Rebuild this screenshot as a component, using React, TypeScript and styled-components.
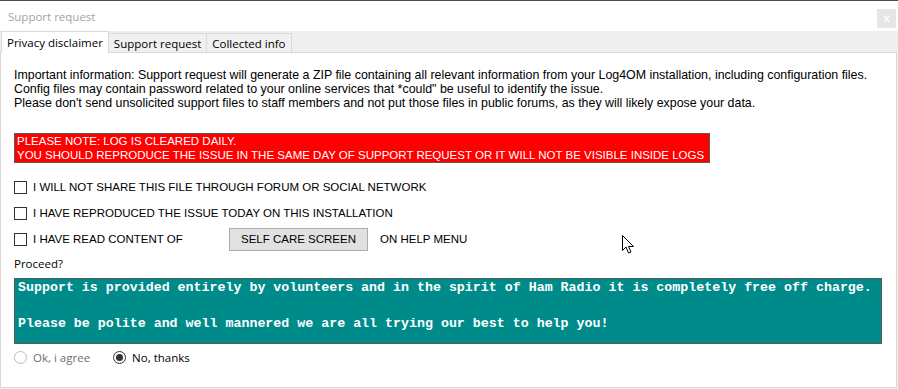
import React, { ReactElement } from "react";
import styled, { createGlobalStyle } from "styled-components";

const GlobalStyle = createGlobalStyle`
  html, body {
    margin: 0;
    padding: 0;
    background: #efefef;
  }
`;

const Window = styled.div`
  position: relative;
  width: 898px;
  height: 389px;
  display: flex;
  flex-direction: column;
  background: #efefef;
  overflow: hidden;
  font-family: "Liberation Sans", Arial, sans-serif;
`;

const TopStrip = styled.div`
  height: 1px;
  background: #4a4a4a;
`;

const TitleBar = styled.div`
  height: 30px;
  background: #fff;
  display: flex;
  align-items: center;
  justify-content: space-between;
  padding: 0 2px 0 8px;
`;

const Title = styled.span`
  font-family: "Open Sans", "Noto Sans", sans-serif;
  font-size: 11.5px;
  color: #a3a3a3;
`;

const CloseButton = styled.div`
  width: 19px;
  height: 19px;
  background: #e6e6e6;
  color: #fff;
  font-family: "Liberation Sans", sans-serif;
  font-size: 11px;
  font-weight: bold;
  display: flex;
  align-items: center;
  justify-content: center;
  margin-top: 4px;
`;

const TabArea = styled.div`
  flex: 1;
  display: flex;
  flex-direction: column;
  padding: 0 1px 1px 0;
`;

const TabStrip = styled.div`
  height: 21px;
  display: flex;
  align-items: flex-end;
  padding-left: 1px;
`;

const Tab = styled.div<{ $active?: boolean }>`
  height: ${(p) => (p.$active ? 21 : 18)}px;
  padding: 0 5px;
  display: flex;
  align-items: center;
  font-family: "Open Sans", "Noto Sans", sans-serif;
  font-size: 11.5px;
  color: #000;
  background: ${(p) => (p.$active ? "#fff" : "#f0f0f0")};
  border: 1px solid #d9d9d9;
  border-bottom: none;
  margin-bottom: ${(p) => (p.$active ? -1 : 0)}px;
  position: relative;
  z-index: ${(p) => (p.$active ? 1 : 0)};
  & + & {
    border-left: none;
  }
`;

const Panel = styled.div`
  flex: 1;
  background: #fff;
  border: 1px solid #d9d9d9;
  padding: 15px 13px 0 13px;
  display: flex;
  flex-direction: column;
`;

const Info = styled.p`
  margin: 0;
  font-size: 12.4px;
  line-height: 14px;
  color: #000;
  white-space: nowrap;
`;

const Notice = styled.div`
  margin-top: 23px;
  width: 696px;
  height: 30px;
  background: #ff0000;
  border: 1px solid #5a5a5a;
  color: #fff;
  font-size: 11.5px;
  line-height: 14px;
  padding-left: 2px;
  box-sizing: border-box;
  white-space: nowrap;
  overflow: hidden;
`;

const Checks = styled.div`
  margin-top: 11px;
  display: flex;
  flex-direction: column;
`;

const Row = styled.div`
  height: 26px;
  display: flex;
  align-items: center;
`;

const Box = styled.span`
  width: 13px;
  height: 13px;
  box-sizing: border-box;
  border: 1px solid #333;
  background: #fff;
  margin-right: 6px;
  flex-shrink: 0;
`;

const CheckLabel = styled.span<{ $w?: number }>`
  font-size: 11.5px;
  color: #000;
  white-space: nowrap;
  width: ${(p) => (p.$w ? `${p.$w}px` : "auto")};
`;

const CareButton = styled.button`
  width: 139px;
  height: 23px;
  background: #e1e1e1;
  border: 1px solid #adadad;
  font-family: "Liberation Sans", Arial, sans-serif;
  font-size: 11.5px;
  color: #000;
  padding: 0;
  margin-right: 12px;
`;

const Proceed = styled.div`
  height: 22px;
  margin-bottom: 4px;
  display: flex;
  align-items: center;
  font-family: "Open Sans", "Noto Sans", sans-serif;
  font-size: 11.5px;
  color: #000;
`;

const Volunteer = styled.div`
  width: 868px;
  height: 66px;
  box-sizing: border-box;
  background: #008b8b;
  border: 1px solid #5a5a5a;
  color: #fff;
  font-family: "Liberation Mono", "DejaVu Sans Mono", monospace;
  font-weight: bold;
  font-size: 13.3px;
  line-height: 18px;
  padding: 0 0 0 3px;
  white-space: pre;
`;

const Radios = styled.div`
  height: 26px;
  display: flex;
  align-items: center;
`;

const RadioItem = styled.label<{ $disabled?: boolean }>`
  display: flex;
  align-items: center;
  font-family: "Open Sans", "Noto Sans", sans-serif;
  font-size: 11.5px;
  color: ${(p) => (p.$disabled ? "#6d6d6d" : "#000")};
  margin-right: 23px;
`;

const Circle = styled.span<{ $checked?: boolean; $disabled?: boolean }>`
  width: 13px;
  height: 13px;
  box-sizing: border-box;
  border-radius: 50%;
  border: 1px solid ${(p) => (p.$disabled ? "#bcbcbc" : "#333")};
  background: #fff;
  margin-right: 6px;
  display: flex;
  align-items: center;
  justify-content: center;
  &::after {
    content: "";
    display: ${(p) => (p.$checked ? "block" : "none")};
    width: 7px;
    height: 7px;
    border-radius: 50%;
    background: #333;
  }
`;

const Cursor = styled.svg`
  position: absolute;
  left: 622px;
  top: 235px;
`;

function App(): ReactElement {
  return (
    <Window>
      <GlobalStyle />
      <TopStrip />
      <TitleBar>
        <Title>Support request</Title>
        <CloseButton>x</CloseButton>
      </TitleBar>
      <TabArea>
        <TabStrip>
          <Tab $active>Privacy disclaimer</Tab>
          <Tab>Support request</Tab>
          <Tab>Collected info</Tab>
        </TabStrip>
        <Panel>
          <Info>
            Important information: Support request will generate a ZIP file containing all relevant
            information from your Log4OM installation, including configuration files.
            <br />
            Config files may contain password related to your online services that *could" be useful
            to identify the issue.
            <br />
            Please don't send unsolicited support files to staff members and not put those files in
            public forums, as they will likely expose your data.
          </Info>
          <Notice>
            PLEASE NOTE: LOG IS CLEARED DAILY.
            <br />
            YOU SHOULD REPRODUCE THE ISSUE IN THE SAME DAY OF SUPPORT REQUEST OR IT WILL NOT BE
            VISIBLE INSIDE LOGS
          </Notice>
          <Checks>
            <Row>
              <Box />
              <CheckLabel>I WILL NOT SHARE THIS FILE THROUGH FORUM OR SOCIAL NETWORK</CheckLabel>
            </Row>
            <Row>
              <Box />
              <CheckLabel>I HAVE REPRODUCED THE ISSUE TODAY ON THIS INSTALLATION</CheckLabel>
            </Row>
            <Row>
              <Box />
              <CheckLabel $w={196}>I HAVE READ CONTENT OF</CheckLabel>
              <CareButton>SELF CARE SCREEN</CareButton>
              <CheckLabel>ON HELP MENU</CheckLabel>
            </Row>
          </Checks>
          <Proceed>Proceed?</Proceed>
          <Volunteer>
            {"Support is provided entirely by volunteers and in the spirit of Ham Radio it is completely free off charge.\n\nPlease be polite and well mannered we are all trying our best to help you!"}
          </Volunteer>
          <Radios>
            <RadioItem $disabled>
              <Circle $disabled />
              Ok, i agree
            </RadioItem>
            <RadioItem>
              <Circle $checked />
              No, thanks
            </RadioItem>
          </Radios>
        </Panel>
      </TabArea>
      <Cursor width="13" height="20" viewBox="0 0 13 20">
        <path
          d="M0.5 0.5 L0.5 15.5 L4 12 L6.5 18 L9 17 L6.5 11.5 L11.5 11.5 Z"
          fill="#fff"
          stroke="#000"
          strokeWidth="1"
        />
      </Cursor>
    </Window>
  );
}

export default App;
